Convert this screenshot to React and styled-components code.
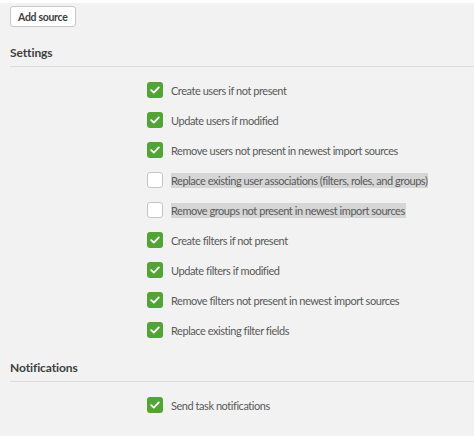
import React from "react";
import styled, { createGlobalStyle } from "styled-components";

const Global = createGlobalStyle`
  html, body { margin: 0; padding: 0; background: #ffffff; }
  body { font-family: Lato, "Liberation Sans", sans-serif; }
`;

const Page = styled.div`
  width: 474px;
  height: 438px;
  box-sizing: border-box;
  border-top: 3px solid #ffffff;
  border-bottom: 2px solid #ffffff;
  background: #f2f2f2;
  padding: 3px 0 0 10px;
  overflow: hidden;
`;

const Toolbar = styled.div`
  display: flex;
`;

const Button = styled.button`
  height: 21px;
  padding: 0 7px;
  background: #ffffff;
  border: 1px solid #c8c8c8;
  border-radius: 3px;
  font-family: inherit;
  font-size: 10.5px;
  letter-spacing: -0.3px;
  font-weight: 700;
  color: #404040;
  cursor: pointer;
`;

const Section = styled.section`
  margin-top: ${(p) => p.$top}px;
`;

const Heading = styled.h2`
  margin: 0;
  padding-bottom: 4px;
  border-bottom: 1px solid #dcdcdc;
  font-size: 12px;
  letter-spacing: -0.1px;
  font-weight: 700;
  color: #404040;
  line-height: 18px;
`;

const List = styled.ul`
  list-style: none;
  margin: 0;
  padding: 15px 0 0 137px;
  display: flex;
  flex-direction: column;
  gap: 14px;
`;

const Row = styled.li`
  display: flex;
  align-items: center;
  gap: 8px;
  height: 16px;
`;

const Box = styled.span`
  width: 16px;
  height: 16px;
  box-sizing: border-box;
  border-radius: 3px;
  display: flex;
  align-items: center;
  justify-content: center;
  flex-shrink: 0;
  background: ${(p) => (p.$on ? "#52a437" : "#ffffff")};
  border: ${(p) => (p.$on ? "none" : "1px solid #c4c4c4")};
`;

const Label = styled.span`
  font-size: 11px;
  letter-spacing: -0.45px;
  white-space: nowrap;
  color: #595959;
  line-height: 15px;
  padding-right: 1px;
  background: ${(p) => (p.$hl ? "#d6d6d6" : "transparent")};
`;

const Check = () => (
  <svg width="10" height="8" viewBox="0 0 10 8">
    <path d="M1.2 4.2 L3.8 6.6 L8.8 1.4" fill="none" stroke="#fff" strokeWidth="1.8" strokeLinecap="round" strokeLinejoin="round" />
  </svg>
);

const settings = [
  ["Create users if not present", true],
  ["Update users if modified", true],
  ["Remove users not present in newest import sources", true],
  ["Replace existing user associations (filters, roles, and groups)", false],
  ["Remove groups not present in newest import sources", false],
  ["Create filters if not present", true],
  ["Update filters if modified", true],
  ["Remove filters not present in newest import sources", true],
  ["Replace existing filter fields", true],
];

const Option = ({ label, on }) => (
  <Row>
    <Box $on={on}>{on && <Check />}</Box>
    <Label $hl={!on}>{label}</Label>
  </Row>
);

export default function App() {
  return (
    <>
      <Global />
      <Page>
        <Toolbar>
          <Button>Add source</Button>
        </Toolbar>
        <Section $top={17}>
          <Heading>Settings</Heading>
          <List>
            {settings.map(([label, on]) => (
              <Option key={label} label={label} on={on} />
            ))}
          </List>
        </Section>
        <Section $top={21}>
          <Heading>Notifications</Heading>
          <List>
            <Option label="Send task notifications" on />
          </List>
        </Section>
      </Page>
    </>
  );
}
